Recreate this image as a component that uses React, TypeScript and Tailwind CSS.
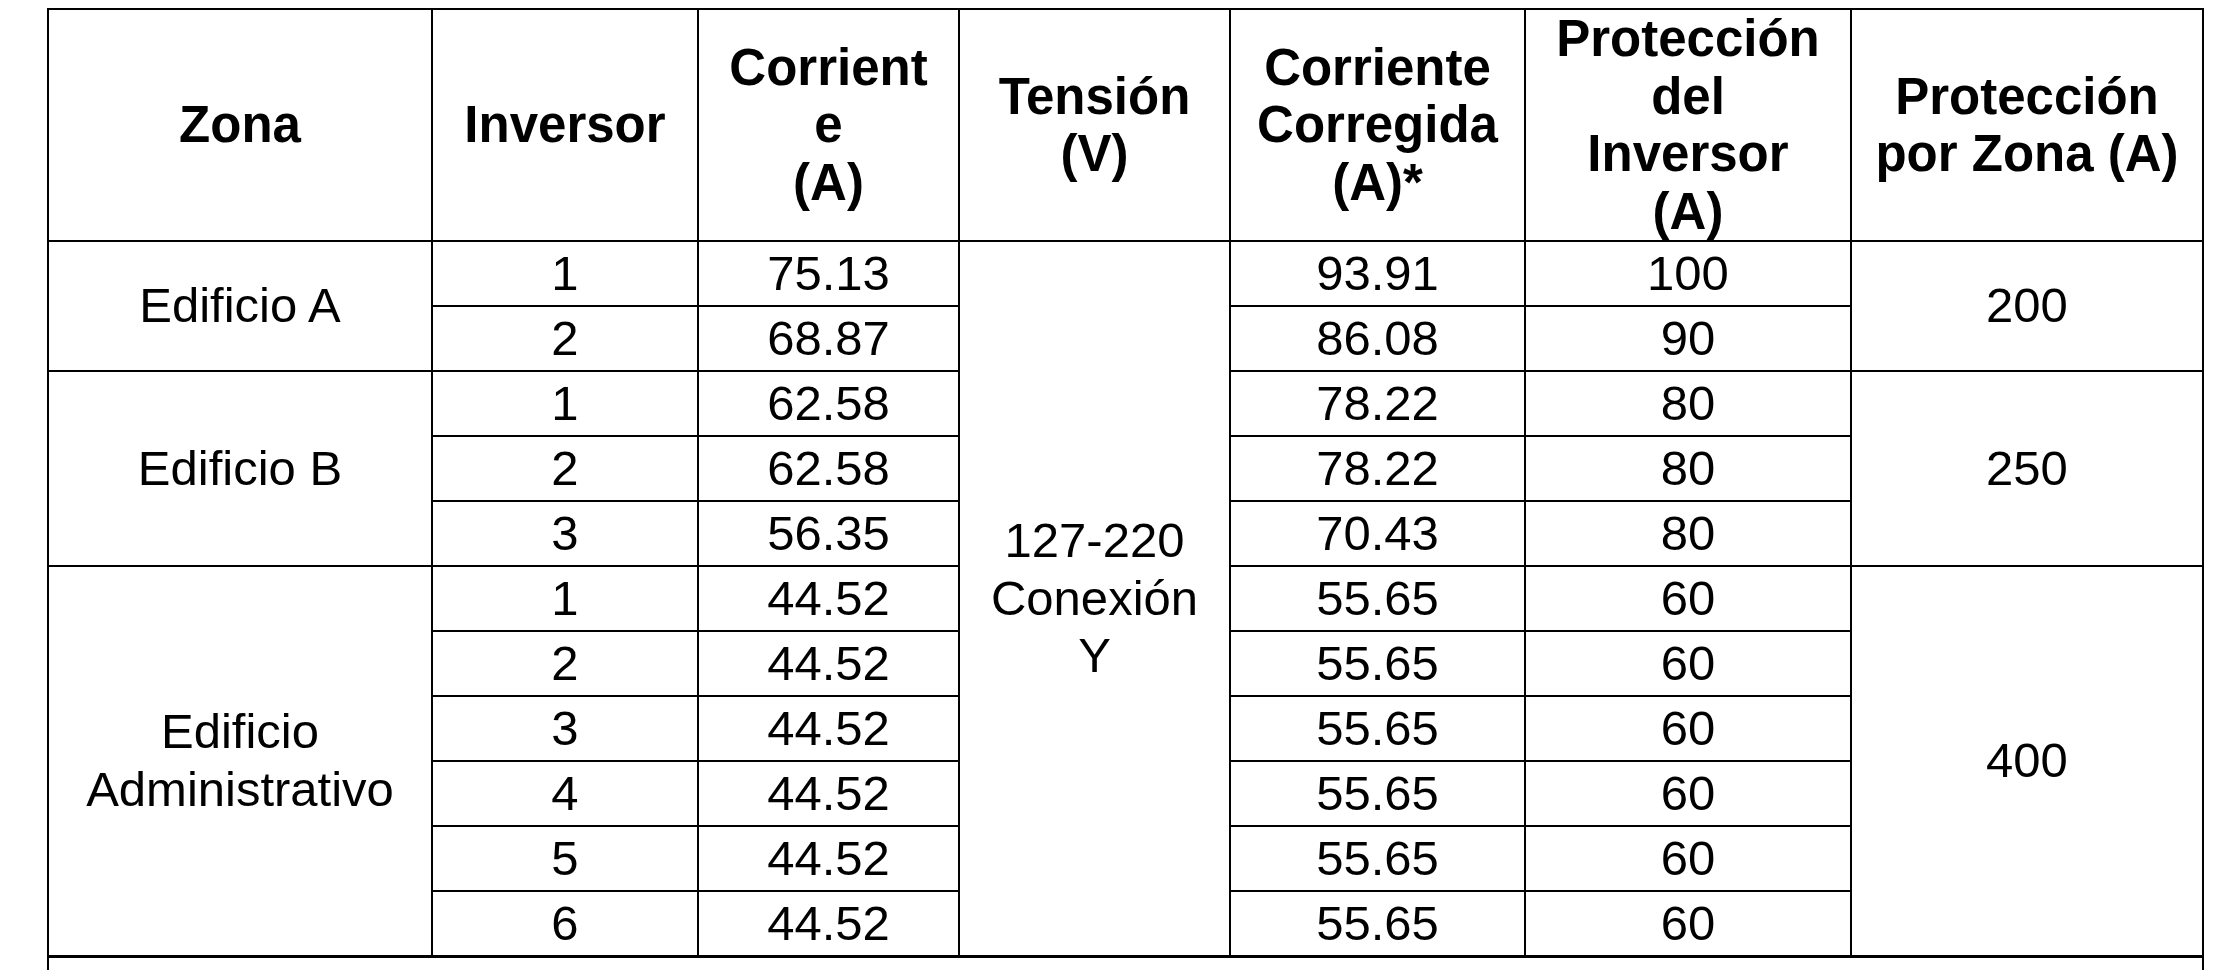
import React from "react";

type Row = {
  inversor: number;
  corriente: string;
  corregida: string;
  proteccion: number;
};

type Zone = {
  name: React.ReactNode;
  total: number;
  rows: Row[];
};

const zones: Zone[] = [
  {
    name: "Edificio A",
    total: 200,
    rows: [
      { inversor: 1, corriente: "75.13", corregida: "93.91", proteccion: 100 },
      { inversor: 2, corriente: "68.87", corregida: "86.08", proteccion: 90 },
    ],
  },
  {
    name: "Edificio B",
    total: 250,
    rows: [
      { inversor: 1, corriente: "62.58", corregida: "78.22", proteccion: 80 },
      { inversor: 2, corriente: "62.58", corregida: "78.22", proteccion: 80 },
      { inversor: 3, corriente: "56.35", corregida: "70.43", proteccion: 80 },
    ],
  },
  {
    name: (
      <>
        Edificio
        <br />
        Administrativo
      </>
    ),
    total: 400,
    rows: [1, 2, 3, 4, 5, 6].map((n) => ({
      inversor: n,
      corriente: "44.52",
      corregida: "55.65",
      proteccion: 60,
    })),
  },
];

const totalRows = zones.reduce((acc, z) => acc + z.rows.length, 0);

const th = "border-2 border-black p-0 text-center align-middle font-bold";
const td = "border-2 border-black p-0 text-center align-middle";

const App = () => {
  return (
    <div
      className="min-h-screen bg-white pt-[8px] pl-[47px] text-black"
      style={{ fontFamily: '"Liberation Sans", Arial, Helvetica, sans-serif' }}
    >
      <table className="w-[2155px] table-fixed border-collapse">
        <colgroup>
          <col className="w-[384px]" />
          <col className="w-[266px]" />
          <col className="w-[261px]" />
          <col className="w-[271px]" />
          <col className="w-[295px]" />
          <col className="w-[326px]" />
          <col className="w-[352px]" />
        </colgroup>
        <thead className="text-[51px] leading-[57.5px]">
          <tr className="h-[232px]">
            <th className={th}>Zona</th>
            <th className={th}>Inversor</th>
            <th className={th}>
              Corrient
              <br />e
              <br />
              (A)
            </th>
            <th className={th}>
              Tensión
              <br />
              (V)
            </th>
            <th className={th}>
              Corriente
              <br />
              Corregida
              <br />
              (A)*
            </th>
            <th className={th}>
              Protección
              <br />
              del
              <br />
              Inversor
              <br />
              (A)
            </th>
            <th className={th}>
              Protección
              <br />
              por Zona (A)
            </th>
          </tr>
        </thead>
        <tbody className="text-[49px] leading-[57.5px]">
          {zones.map((zone, zi) =>
            zone.rows.map((row, ri) => (
              <tr key={`${zi}-${ri}`} className="h-[65px]">
                {ri === 0 && (
                  <td className={td} rowSpan={zone.rows.length}>
                    {zone.name}
                  </td>
                )}
                <td className={td}>{row.inversor}</td>
                <td className={td}>{row.corriente}</td>
                {zi === 0 && ri === 0 && (
                  <td className={td} rowSpan={totalRows}>
                    127-220
                    <br />
                    Conexión
                    <br />Y
                  </td>
                )}
                <td className={td}>{row.corregida}</td>
                <td className={td}>{row.proteccion}</td>
                {ri === 0 && (
                  <td className={td} rowSpan={zone.rows.length}>
                    {zone.total}
                  </td>
                )}
              </tr>
            ))
          )}
          <tr className="h-[80px]">
            <td
              colSpan={7}
              className="border-x-2 border-t-[3px] border-b-2 border-black p-0"
            />
          </tr>
        </tbody>
      </table>
    </div>
  );
};

export default App;
